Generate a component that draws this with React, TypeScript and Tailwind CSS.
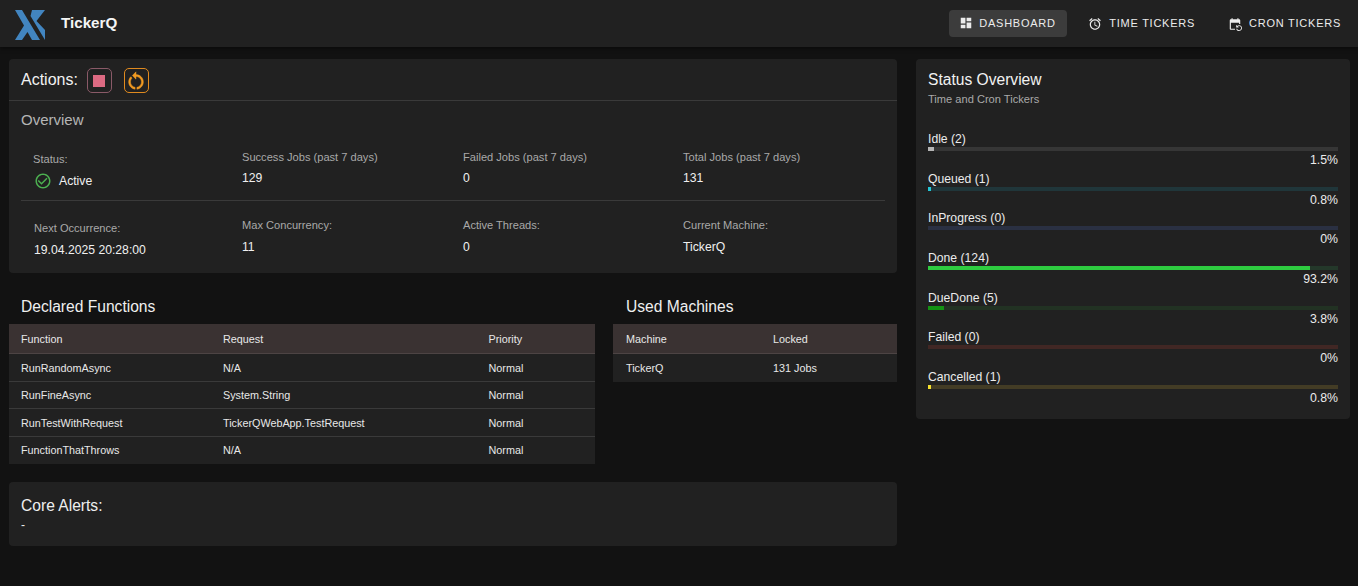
const Ic = ({ d, className }: { d: string; className: string }) => (
  <svg viewBox="0 0 24 24" fill="currentColor" className={className}>
    <path d={d} />
  </svg>
);

const icons = {
  dash: "M3 13h8V3H3v10zm0 8h8v-6H3v6zm10 0h8V11h-8v10zm0-18v6h8V3h-8z",
  alarm:
    "M22 5.72l-4.6-3.86-1.29 1.53 4.6 3.86L22 5.72zM7.88 3.39L6.6 1.86 2 5.71l1.29 1.53 4.59-3.85zM12.5 8H11v6l4.75 2.85.75-1.23-4-2.37V8zM12 4c-4.97 0-9 4.03-9 9s4.02 9 9 9c4.97 0 9-4.03 9-9s-4.03-9-9-9zm0 16c-3.87 0-7-3.13-7-7s3.13-7 7-7 7 3.13 7 7-3.13 7-7 7z",
  cron:
    "M21 12V6c0-1.1-.9-2-2-2h-1V2h-2v2H8V2H6v2H5c-1.1 0-2 .9-2 2v14c0 1.1.9 2 2 2h7v-2H5V10h14v2h2zm-5.36 8c.43 1.45 1.77 2.5 3.36 2.5 1.93 0 3.5-1.57 3.5-3.5s-1.57-3.5-3.5-3.5c-.95 0-1.82.38-2.45 1H18V18h-4v-4h1.5v1.43c.9-.88 2.14-1.43 3.5-1.43 2.76 0 5 2.24 5 5s-2.24 5-5 5c-2.42 0-4.44-1.72-4.9-4h1.54z",
  restart:
    "M12 5V2L8 6l4 4V7c3.31 0 6 2.69 6 6 0 2.97-2.17 5.43-5 5.91v2.02c3.95-.49 7-3.85 7-7.93 0-4.42-3.58-8-8-8zm-6 8c0-1.65.67-3.15 1.76-4.24L6.34 7.34C4.9 8.79 4 10.79 4 13c0 4.08 3.05 7.44 7 7.93v-2.02c-2.83-.48-5-2.94-5-5.91z",
  check:
    "M16.59 7.58 10 14.17l-3.59-3.58L5 12l5 5 8-8zM12 2C6.48 2 2 6.48 2 12s4.48 10 10 10 10-4.48 10-10S17.52 2 12 2zm0 18c-4.42 0-8-3.58-8-8s3.58-8 8-8 8 3.58 8 8-3.58 8-8 8z",
};

const Logo = () => (
  <svg viewBox="0 0 32 32" className="w-[32px] h-[32px] shrink-0 -ml-px" fill="#4285c0">
    <polygon points="1,2 8,2 26,32 18,32 13.5,24 8,32 1,32 10,17.5" />
    <polygon points="18,2 31,2 22.5,13 31,22 31,32 16.5,8" />
  </svg>
);

const Stat = ({ label, value, width, gap }: { label: string; value: string; width: string; gap: string }) => (
  <div className={width}>
    <div className="text-[11.1px] leading-[14px] text-[#a9a9a9]">{label}</div>
    <div className={`text-[12.2px] leading-[15px] text-[#f0f0f0] ${gap}`}>{value}</div>
  </div>
);

const Th = ({ children, className }: { children: string; className: string }) => (
  <div className={`text-[10.8px] pt-px text-[#e8e8e8] ${className}`}>{children}</div>
);

const functions = [
  ["RunRandomAsync", "N/A", "Normal"],
  ["RunFineAsync", "System.String", "Normal"],
  ["RunTestWithRequest", "TickerQWebApp.TestRequest", "Normal"],
  ["FunctionThatThrows", "N/A", "Normal"],
];

const bars = [
  { label: "Idle (2)", pct: "1.5%", w: 1.5, track: "bg-[#363636]", fill: "bg-[#b5b5b5]" },
  { label: "Queued (1)", pct: "0.8%", w: 0.8, track: "bg-[#20363a]", fill: "bg-[#22c5d5]" },
  { label: "InProgress (0)", pct: "0%", w: 0, track: "bg-[#2a3042]", fill: "bg-[#3f51b5]" },
  { label: "Done (124)", pct: "93.2%", w: 93.2, track: "bg-[#24382a]", fill: "bg-[#2ecc40]" },
  { label: "DueDone (5)", pct: "3.8%", w: 3.8, track: "bg-[#223223]", fill: "bg-[#149214]" },
  { label: "Failed (0)", pct: "0%", w: 0, track: "bg-[#412724]", fill: "bg-[#e53935]" },
  { label: "Cancelled (1)", pct: "0.8%", w: 0.8, track: "bg-[#433c25]", fill: "bg-[#f5e02e]" },
];

export default function App() {
  return (
    <div className="min-h-[586px] bg-[#121212] text-white font-['Liberation_Sans',Arial,sans-serif]">
      <header className="h-[47px] bg-[#212121] flex items-center pl-[15px] pr-[17px] shadow-[0_2px_4px_rgba(0,0,0,0.4)]">
        <Logo />
        <div className="ml-[15px] text-[15.2px] font-bold text-[#f5f5f5]">TickerQ</div>
        <nav className="ml-auto flex items-center text-[11px] tracking-[0.75px] text-[#ececec]">
          <div className="w-[118px] h-[27px] mb-px rounded bg-[#3c3c3c] flex items-center pl-[10px] gap-[6px]">
            <Ic d={icons.dash} className="w-[14px] h-[14px]" />
            DASHBOARD
          </div>
          <div className="ml-[21px] flex items-center gap-[7px]">
            <Ic d={icons.alarm} className="w-[14px] h-[14px]" />
            TIME TICKERS
          </div>
          <div className="ml-[33px] flex items-center gap-[7px]">
            <Ic d={icons.cron} className="w-[14px] h-[14px]" />
            CRON TICKERS
          </div>
        </nav>
      </header>

      <main className="flex items-start gap-[19px] pl-[9px] pr-[8px] pt-[12px]">
        <div className="w-[888px] shrink-0">
          <section className="h-[214px] bg-[#212121] rounded">
            <div className="h-[42px] border-b border-[#3a3a3a] flex items-center pl-[12px]">
              <span className="text-[16px] text-[#f2f2f2]">Actions:</span>
              <button className="ml-[9px] mt-[2px] w-[25px] h-[25px] rounded-[5px] border border-[#8a5a68] flex items-center justify-center">
                <span className="block w-[12px] h-[12px] bg-[#dc6a82]" />
              </button>
              <button className="ml-[12px] mt-[2px] w-[25px] h-[25px] rounded-[5px] border border-[#e08a1f] flex items-center justify-center text-[#f09a22]">
                <Ic d={icons.restart} className="w-[22px] h-[22px] stroke-current stroke-[0.5px]" />
              </button>
            </div>
            <div className="pl-[12px] pt-[10px] text-[15px] leading-[18px] text-[#b5b5b5]">Overview</div>
            <div className="mx-[12px] mt-[14px]">
              <div className="h-[58px] flex items-start border-b border-[#3a3a3a]">
                <div className="w-[221px] pl-[12px] pt-[9px]">
                  <div className="text-[11.1px] leading-[14px] text-[#a9a9a9]">Status:</div>
                  <div className="mt-[6px] flex items-center gap-[7px] text-[12.2px] text-[#f0f0f0]">
                    <Ic d={icons.check} className="ml-px w-[18px] h-[18px] text-[#4caf50]" />
                    Active
                  </div>
                </div>
                <div className="flex pt-[7px]">
                  <Stat gap="mt-[7px]" width="w-[221px]" label="Success Jobs (past 7 days)" value="129" />
                  <Stat gap="mt-[7px]" width="w-[220px]" label="Failed Jobs (past 7 days)" value="0" />
                  <Stat gap="mt-[7px]" width="w-[200px]" label="Total Jobs (past 7 days)" value="131" />
                </div>
              </div>
              <div className="flex items-start pt-[13px]">
                <div className="w-[221px] pl-[13px] pt-[7px]">
                  <div className="text-[11.1px] leading-[14px] text-[#a9a9a9]">Next Occurrence:</div>
                  <div className="mt-[8px] text-[12.2px] leading-[15px] text-[#f0f0f0]">19.04.2025 20:28:00</div>
                </div>
                <div className="flex pt-[4px]">
                  <Stat gap="mt-[8px]" width="w-[221px]" label="Max Concurrency:" value="11" />
                  <Stat gap="mt-[8px]" width="w-[220px]" label="Active Threads:" value="0" />
                  <Stat gap="mt-[8px]" width="w-[200px]" label="Current Machine:" value="TickerQ" />
                </div>
              </div>
            </div>
          </section>

          <div className="flex gap-[18px] mt-[23px]">
            <section className="w-[586px]">
              <h2 className="pl-[12px] text-[15.6px] leading-[19px] font-normal text-[#efefef] mb-[8px] pt-px">Declared Functions</h2>
              <div className="h-[30px] bg-[#3a3232] border-b border-[#4d4444] flex items-center">
                <Th className="w-[214px] pl-[12px]">Function</Th>
                <Th className="w-[265.5px]">Request</Th>
                <Th className="">Priority</Th>
              </div>
              {functions.map(([a, b, c], i) => (
                <div key={a} className={`h-[27.5px] bg-[#212121] flex items-center text-[10.8px] text-[#e8e8e8] ${i < 3 ? "pt-px border-b border-[#3a3a3a]" : ""}`}>
                  <div className="w-[214px] pl-[12px]">{a}</div>
                  <div className="w-[265.5px]">{b}</div>
                  <div>{c}</div>
                </div>
              ))}
            </section>
            <section className="w-[284px]">
              <h2 className="pl-[13px] text-[15.6px] leading-[19px] font-normal text-[#efefef] mb-[8px] pt-px">Used Machines</h2>
              <div className="h-[30px] bg-[#3a3232] border-b border-[#4d4444] flex items-center">
                <Th className="w-[160px] pl-[13px]">Machine</Th>
                <Th className="">Locked</Th>
              </div>
              <div className="h-[27.5px] pt-px bg-[#212121] flex items-center text-[10.8px] text-[#e8e8e8]">
                <div className="w-[160px] pl-[13px]">TickerQ</div>
                <div>131 Jobs</div>
              </div>
            </section>
          </div>

          <section className="mt-[18px] h-[64px] bg-[#212121] rounded pl-[12px] pt-[15px]">
            <div className="text-[15.6px] leading-[18px] text-[#efefef]">Core Alerts:</div>
            <div className="mt-[3px] text-[12.2px] leading-[15px] text-[#e8e8e8]">-</div>
          </section>
        </div>

        <aside className="w-[434px] h-[360px] bg-[#212121] rounded pl-[12px] pr-[12px] pt-[11px]">
          <div className="text-[15.6px] leading-[19px] text-[#f2f2f2]">Status Overview</div>
          <div className="mt-[3px] text-[11.1px] leading-[14px] text-[#a9a9a9]">Time and Cron Tickers</div>
          <div className="mt-[26px]">
            {bars.map((b) => (
              <div key={b.label} className="h-[39.67px]">
                <div className="text-[12.2px] leading-[15px] text-[#ececec]">{b.label}</div>
                <div className={`h-[4px] ${b.track}`}>
                  <div className={`h-full ${b.fill}`} style={{ width: `${b.w}%` }} />
                </div>
                <div className="mt-[2px] text-right text-[12.3px] leading-[15px] text-[#ececec]">{b.pct}</div>
              </div>
            ))}
          </div>
        </aside>
      </main>
    </div>
  );
}
